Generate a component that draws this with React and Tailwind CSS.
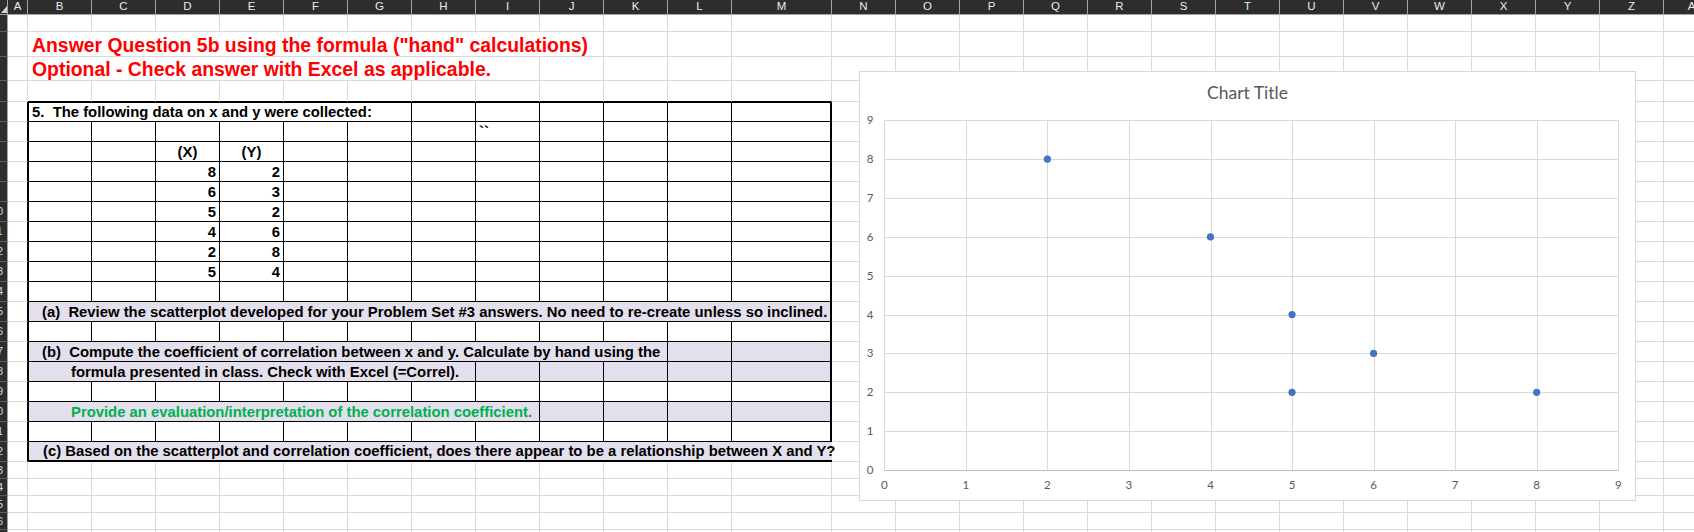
import React from "react";

// sheet columns after the row header: A, B..L, M, N..AA
const COLS = ["A", "B", "C", "D", "E", "F", "G", "H", "I", "J", "K", "L", "M", "N", "O", "P", "Q", "R", "S", "T", "U", "V", "W", "X", "Y", "Z", "AA"];
const ROWS = 27;

const lav = "bg-[#e4dfec]";

// cells for B..M, 12 columns in all
function singles(n, extra = {}) {
    return Array.from({ length: n }, () => ({ span: 1, ...extra }));
}

const SPECS = {
    2: [
        { span: 9, text: 'Answer Question 5b using the formula ("hand" calculations)', cls: "text-[#ff0000] text-[19.4px] leading-[22px] pl-[4px]" },
        ...singles(3),
    ],
    3: [
        { span: 8, text: "Optional - Check answer with Excel as applicable.", cls: "text-[#ff0000] text-[19.4px] leading-[22px] pl-[4px]" },
        ...singles(4),
    ],
    5: [{ span: 6, text: "5.  The following data on x and y were collected:", cls: "pl-[3px]" }, ...singles(6)],
    6: [...singles(7), { span: 1, text: "``", cls: "pl-[3px]" }, ...singles(4)],
    7: [
        ...singles(2),
        { span: 1, text: "(X)", cls: "justify-center" },
        { span: 1, text: "(Y)", cls: "justify-center" },
        ...singles(8),
    ],
    15: [{ span: 12, text: "(a)  Review the scatterplot developed for your Problem Set #3 answers. No need to re-create unless so inclined.", cls: "pl-[13px] " + lav }],
    17: [
        { span: 10, text: "(b)  Compute the coefficient of correlation between x and y. Calculate by hand using the", cls: "pl-[13px] " + lav },
        ...singles(2, { cls: lav }),
    ],
    18: [
        { span: 7, text: "formula presented in class. Check with Excel (=Correl).", cls: "pl-[42px] " + lav },
        ...singles(5, { cls: lav }),
    ],
    20: [
        { span: 8, text: "Provide an evaluation/interpretation of the correlation coefficient.", cls: "pl-[42px] text-[#00b050] " + lav },
        ...singles(4, { cls: lav }),
    ],
    22: [{ span: 12, text: "(c) Based on the scatterplot and correlation coefficient, does there appear to be a relationship between X and Y?", cls: "pl-[14px] " + lav, openRight: true }],
};

const DATA = [
    [8, 2],
    [6, 3],
    [5, 2],
    [4, 6],
    [2, 8],
    [5, 4],
];
DATA.forEach(([x, y], i) => {
    SPECS[8 + i] = [
        ...singles(2),
        { span: 1, text: String(x), cls: "justify-end pr-[3px]" },
        { span: 1, text: String(y), cls: "justify-end pr-[3px]" },
        ...singles(8),
    ];
});

const SPAN = {
    1: "col-span-1",
    6: "col-span-6",
    7: "col-span-7",
    8: "col-span-8",
    9: "col-span-9",
    10: "col-span-10",
    12: "col-span-12",
};

function RowHeader({ n }) {
    return (
        <div className="bg-[#2d2d2d] border-r border-b border-r-[#a3a3a3] border-b-[#5c5c5c] overflow-hidden flex items-center">
            <div className="w-[22px] -ml-[14px] shrink-0 text-center text-[11px] font-normal leading-none text-[#d4d4d4]">{n}</div>
        </div>
    );
}

function sheetRow(r) {
    const inTable = r >= 5 && r <= 22;
    const cells = [<RowHeader key="h" n={r} />];

    cells.push(
        <div key="A" className={"border-r border-b border-b-[#dadada] " + (inTable ? "border-r-black" : "border-r-[#dadada]")} />
    );

    const spec = SPECS[r] || singles(12);
    let col = 0;
    spec.forEach((c, i) => {
        const first = col === 0;
        col += c.span;
        const last = col === 12;
        let cls = "min-w-0 flex items-end whitespace-pre leading-[17px] " + SPAN[c.span] + " ";
        if (inTable) {
            cls += "border-b border-black ";
            if (last) cls += c.openRight ? "border-r-0 " : "border-r-2 ";
            else cls += "border-r ";
            if (first) cls += "border-l ";
            if (r === 5) cls += "border-t ";
            if (r === 22) cls += "border-b-2 ";
        } else if (r === 4) {
            cls += "border-r border-b border-r-[#dadada] border-b-black ";
        } else {
            cls += "border-r border-b border-[#dadada] ";
        }
        cls += c.cls || "";
        cells.push(
            <div key={"c" + i} className={cls}>
                {c.text}
            </div>
        );
    });

    for (let k = 13; k < COLS.length; k++) {
        cells.push(<div key={COLS[k]} className="border-r border-b border-[#dadada]" />);
    }
    return cells;
}

function Chart() {
    const px = (x) => 24.3 + x * 81.55;
    const py = (y) => 398 - y * 38.85;
    const crisp = (v) => Math.round(v) + 0.5;
    const ticks = [0, 1, 2, 3, 4, 5, 6, 7, 8, 9];
    return (
        <div className="absolute left-[859px] top-[71px] w-[777px] h-[430px] border border-[#d9d9d9] bg-white font-normal">
            <div className="absolute left-0 right-0 top-[9px] text-center text-[17.5px] leading-[24px] text-[#595959] font-['Lato',sans-serif] font-normal">
                Chart Title
            </div>
            <svg width="775" height="428" className="block">
                {ticks.map((t) => (
                    <line key={"v" + t} x1={crisp(px(t))} x2={crisp(px(t))} y1={crisp(py(9))} y2={crisp(py(0))} stroke="#d9d9d9" strokeWidth="1" />
                ))}
                {ticks.map((t) => (
                    <line key={"h" + t} x1={crisp(px(0))} x2={crisp(px(9))} y1={crisp(py(t))} y2={crisp(py(t))} stroke={t === 0 ? "#bfbfbf" : "#d9d9d9"} strokeWidth="1" />
                ))}
                {ticks.map((t) => (
                    <text key={"yl" + t} x="13.5" y={py(t)} dy="4" textAnchor="end" fontSize="11.5" fontWeight="400" fill="#595959" fontFamily="Lato, sans-serif">
                        {t}
                    </text>
                ))}
                {ticks.map((t) => (
                    <text key={"xl" + t} x={px(t)} y="417" textAnchor="middle" fontSize="11.5" fontWeight="400" fill="#595959" fontFamily="Lato, sans-serif">
                        {t}
                    </text>
                ))}
                {DATA.map(([x, y], i) => (
                    <circle key={i} cx={px(x)} cy={py(y)} r="3.6" fill="#4472c4" />
                ))}
            </svg>
        </div>
    );
}

export default function App() {
    return (
        <div className="relative w-[1694px] h-[532px] overflow-hidden bg-white font-['Liberation_Sans',Arial,sans-serif] font-bold text-[14.85px] text-black">
            <div className="grid grid-cols-[8px_20px_repeat(11,64px)_100px_repeat(14,64px)] grid-rows-[15px_17px_25px_24px_21px_repeat(18,20px)_repeat(5,17px)]">
                {/* column headers */}
                <div className="bg-[#2d2d2d] border-r border-b border-[#a3a3a3]">
                    <svg width="8" height="15" className="block">
                        <polygon points="7,6 7,13 1,13" fill="#d6d6d6" />
                    </svg>
                </div>
                {COLS.map((c) => (
                    <div
                        key={c}
                        className="bg-[#2d2d2d] border-r border-b border-[#a3a3a3] flex items-center justify-center text-[11.5px] font-normal leading-none text-[#ececec] whitespace-nowrap"
                    >
                        {c}
                    </div>
                ))}
                {Array.from({ length: ROWS }, (_, i) => sheetRow(i + 1))}
            </div>
            <Chart />
        </div>
    );
}
